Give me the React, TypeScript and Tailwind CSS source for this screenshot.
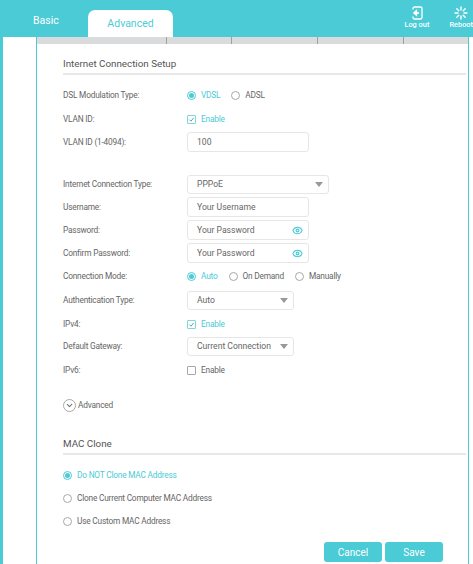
import { ReactNode } from 'react'
import { ChevronDown, Eye } from 'lucide-react'

const teal = 'text-[#4acbd6]'

function Radio({ on }: { on?: boolean }) {
  return (
    <span className={`flex h-[9px] w-[9px] shrink-0 items-center justify-center rounded-full border bg-white ${on ? 'border-[#4acbd6]' : 'border-[#a8a8a8]'}`}>
      {on && <span className="h-[5px] w-[5px] rounded-full bg-[#4acbd6]" />}
    </span>
  )
}

function Check({ on }: { on?: boolean }) {
  return (
    <span className={`flex h-[9px] w-[9px] shrink-0 items-center justify-center rounded-[1px] border bg-white ${on ? 'border-[#7fd6de]' : 'border-[#a8a8a8]'}`}>
      {on && (
        <svg viewBox="0 0 10 10" className="h-[7px] w-[7px]" fill="none" stroke="#4f9aa3" strokeWidth="1.3">
          <path d="M2 5.2 4.2 7.4 8 2.8" />
        </svg>
      )}
    </span>
  )
}

function Row({ label, h = 'h-[23px]', children }: { label: string; h?: string; children: ReactNode }) {
  return (
    <div className={`flex items-center ${h}`}>
      <div className="w-[124px] shrink-0 text-[8.3px] tracking-[-0.2px] text-[#666]">{label}</div>
      {children}
    </div>
  )
}

function Field({ value, eye, w = 'w-[122px]' }: { value: string; eye?: boolean; w?: string }) {
  return (
    <div className={`flex h-[20px] items-center justify-between rounded-[3px] border border-[#e6e6e6] bg-white pl-[9px] pr-[5px] text-[8.6px] text-[#666] ${w}`}>
      <span>{value}</span>
      {eye && <Eye size={11} strokeWidth={2.4} className={teal} />}
    </div>
  )
}

function Select({ value, w }: { value: string; w: string }) {
  return (
    <div className={`flex h-[19px] items-center justify-between rounded-[3px] border border-[#e6e6e6] bg-white pl-[9px] pr-[5px] text-[8.6px] text-[#666] ${w}`}>
      <span>{value}</span>
      <span className="h-0 w-0 border-x-[4px] border-t-[5px] border-x-transparent border-t-[#999]" />
    </div>
  )
}

function Choice({ kind, on, label, gap = 'mr-[11px]' }: { kind: 'radio' | 'check'; on?: boolean; label: string; gap?: string }) {
  return (
    <span className={`flex items-center gap-[5px] text-[8.3px] tracking-[-0.2px] ${gap} ${on ? teal : 'text-[#666]'}`}>
      {kind === 'radio' ? <Radio on={on} /> : <Check on={on} />}
      {label}
    </span>
  )
}

function Section({ title }: { title: string }) {
  return (
    <div className="flex h-[20px] items-center border-b-2 border-[#e8e8e8] text-[9.8px] text-[#555]">{title}</div>
  )
}

export default function App() {
  return (
    <div className="h-[564px] w-[473px] overflow-hidden bg-white font-['Roboto','Liberation_Sans',sans-serif]">
      {/* top bar */}
      <div className="flex h-[37px] bg-[#4acbd6] text-white">
        <div className="flex w-[88px] items-end pb-[8px] pl-[33px] text-[10.5px]">Basic</div>
        <div className={`flex h-[27px] w-[85px] items-center justify-center self-end rounded-t-[7px] bg-white text-[10.5px] ${teal}`}>Advanced</div>
        <div className="flex flex-1 items-start justify-end pt-[6px]">
          <div className="mr-[20px] flex flex-col items-center text-[7.4px] font-medium leading-[8px]">
            <svg viewBox="0 0 14 14" className="h-[14px] w-[14px]" fill="none" stroke="white" strokeWidth="1.3">
              <path d="M3 3.5V2.5a1.5 1.5 0 0 1 1.5-1.5h6A1.5 1.5 0 0 1 12 2.5v9a1.5 1.5 0 0 1-1.5 1.5h-6A1.5 1.5 0 0 1 3 11.5v-1" />
              <path d="M9 7H4.5" strokeWidth="1.6" />
              <path d="M6.5 4.6 3.8 7l2.7 2.4z" fill="white" />
            </svg>
            <span className="mt-[1px]">Log out</span>
          </div>
          <div className="flex flex-col items-center text-[7.4px] font-medium leading-[8px]">
            <svg viewBox="0 0 14 14" className="h-[14px] w-[14px]" fill="none" stroke="white" strokeWidth="1.4" strokeLinecap="round">
              <path d="M7 1v3M7 10v3M1 7h3M10 7h3M2.8 2.8l2 2M9.2 9.2l2 2M2.8 11.2l2-2M9.2 4.8l2-2" />
            </svg>
            <span className="mt-[1px]">Reboot</span>
          </div>
        </div>
      </div>

      <div className="flex h-[527px]">
        <div className="w-[3px] bg-[#4acbd6]" />
        <div className="w-[33px]" />
        {/* panel */}
        <div className="w-[433px] border-x border-[#4acbd6]">
          <div className="flex h-[7px] bg-[#d9dbdc]">
            <div className="w-[130px] border-r border-[#9da0a1]" />
            <div className="w-[65px] border-r border-[#9da0a1]" />
            <div className="w-[86px] border-r border-[#9da0a1]" />
            <div className="w-[86px] border-r border-[#9da0a1]" />
          </div>
          <div className="pl-[26px] pr-[2px] pt-[11px]">
            <Section title="Internet Connection Setup" />
            <div className="mt-[8px]">
              <Row label="DSL Modulation Type:" h="h-[24px]">
                <Choice kind="radio" on label="VDSL" />
                <Choice kind="radio" label="ADSL" />
              </Row>
              <Row label="VLAN ID:" h="h-[24px]"><Choice kind="check" on label="Enable" /></Row>
              <Row label="VLAN ID (1-4094):" h="h-[22px]"><Field value="100" /></Row>
              <div className="h-[19px]" />
              <Row label="Internet Connection Type:" h="h-[24px]"><Select value="PPPoE" w="w-[142px]" /></Row>
              <Row label="Username:" h="h-[22px]"><Field value="Your Username" /></Row>
              <Row label="Password:" h="h-[24px]"><Field value="Your Password" eye /></Row>
              <Row label="Confirm Password:" h="h-[22px]"><Field value="Your Password" eye /></Row>
              <Row label="Connection Mode:" h="h-[24px]">
                <Choice kind="radio" on label="Auto" />
                <Choice kind="radio" label="On Demand" />
                <Choice kind="radio" label="Manually" />
              </Row>
              <Row label="Authentication Type:" h="h-[24px]"><Select value="Auto" w="w-[107px]" /></Row>
              <Row label="IPv4:" h="h-[24px]"><Choice kind="check" on label="Enable" /></Row>
              <Row label="Default Gateway:" h="h-[20px]"><Select value="Current Connection" w="w-[107px]" /></Row>
              <Row label="IPv6:" h="h-[28px]"><Choice kind="check" label="Enable" /></Row>
            </div>
            <div className="mt-[15px] flex items-center gap-[2px] text-[8.3px] tracking-[-0.2px] text-[#666]">
              <span className="flex h-[13px] w-[13px] items-center justify-center rounded-full border border-[#a8a8a8]">
                <ChevronDown size={9} strokeWidth={3} className="text-[#777]" />
              </span>
              Advanced
            </div>
            <div className="mt-[23px]"><Section title="MAC Clone" /></div>
            <div className="mt-[9px] flex flex-col">
              <div className="flex h-[23px] items-center"><Choice kind="radio" on label="Do NOT Clone MAC Address" /></div>
              <div className="flex h-[23px] items-center"><Choice kind="radio" label="Clone Current Computer MAC Address" /></div>
              <div className="flex h-[23px] items-center"><Choice kind="radio" label="Use Custom MAC Address" /></div>
            </div>
            <div className="mt-[9px] flex justify-end gap-[3px] pr-[23px] text-[10px] text-white">
              <div className="flex h-[20px] w-[58px] items-center justify-center rounded-[3px] bg-[#4acbd6]">Cancel</div>
              <div className="flex h-[20px] w-[58px] items-center justify-center rounded-[3px] bg-[#4acbd6]">Save</div>
            </div>
          </div>
        </div>
      </div>
    </div>
  )
}
